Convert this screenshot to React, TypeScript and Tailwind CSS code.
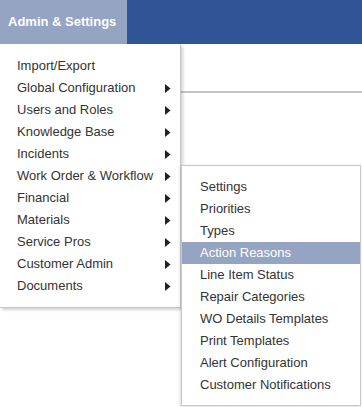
import React from "react";

const mainItems: { label: string; arrow: boolean }[] = [
  { label: "Import/Export", arrow: false },
  { label: "Global Configuration", arrow: true },
  { label: "Users and Roles", arrow: true },
  { label: "Knowledge Base", arrow: true },
  { label: "Incidents", arrow: true },
  { label: "Work Order & Workflow", arrow: true },
  { label: "Financial", arrow: true },
  { label: "Materials", arrow: true },
  { label: "Service Pros", arrow: true },
  { label: "Customer Admin", arrow: true },
  { label: "Documents", arrow: true },
];

const subItems = [
  "Settings",
  "Priorities",
  "Types",
  "Action Reasons",
  "Line Item Status",
  "Repair Categories",
  "WO Details Templates",
  "Print Templates",
  "Alert Configuration",
  "Customer Notifications",
];

function Arrow() {
  return (
    <svg width="6" height="9" viewBox="0 0 6 9" className="absolute left-[165px] top-[7px]">
      <polygon points="0,0 5.5,4.5 0,9" fill="#222" />
    </svg>
  );
}

export default function App() {
  return (
    <div className="relative w-[362px] h-[407px] bg-white overflow-hidden font-['Liberation_Sans',Arial,sans-serif] text-[13px]">
      <div className="flex h-[44px] bg-[#2f5597]">
        <div className="w-[127px] bg-[#95a4c3] text-white font-bold flex items-center pl-2">
          Admin &amp; Settings
        </div>
      </div>
      <div className="mt-[47px] h-[2px] bg-[#c4c4c4]" />

      <div className="absolute left-0 top-[44px] w-[181px] bg-white border-r border-b border-[#c8c8c8] shadow-[2px_2px_3px_rgba(0,0,0,0.18)] pt-[11px] pb-[10px]">
        {mainItems.map((it) => (
          <div key={it.label} className="relative h-[22px] leading-[22px] pl-[17px] text-[#333]">
            {it.label}
            {it.arrow && <Arrow />}
          </div>
        ))}
      </div>

      <div className="absolute left-[181px] top-[165px] w-[180px] bg-white border border-[#c8c8c8] shadow-[-1px_1px_3px_rgba(0,0,0,0.15)] pt-[10px] pb-[9px]">
        {subItems.map((s) => (
          <div
            key={s}
            className={
              s === "Action Reasons"
                ? "h-[22px] leading-[22px] pl-[18px] bg-[#95a4c3] text-white"
                : "h-[22px] leading-[22px] pl-[18px] text-[#333]"
            }
          >
            {s}
          </div>
        ))}
      </div>
    </div>
  );
}
